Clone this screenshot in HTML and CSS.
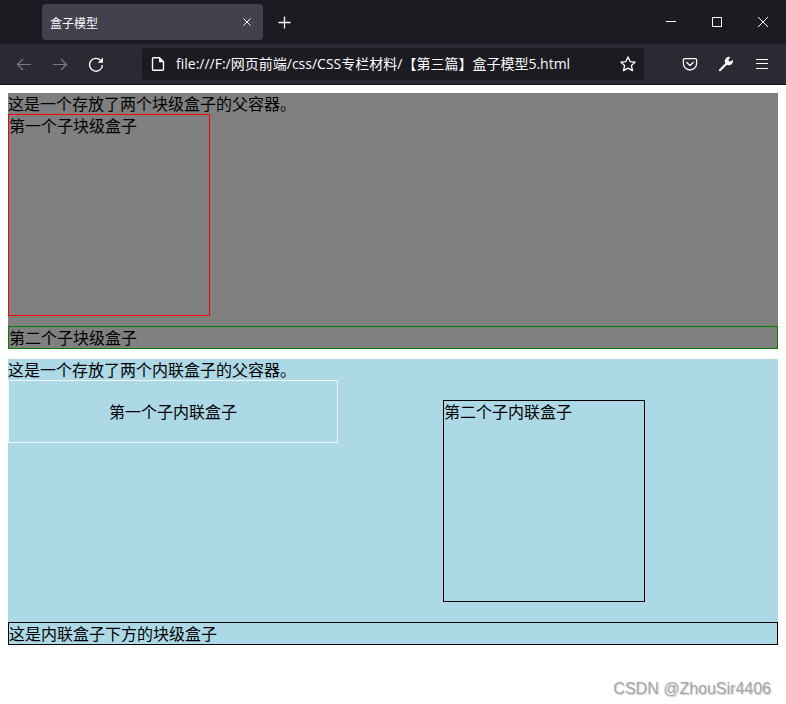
FILE: index.html
```html
<!DOCTYPE html>
<html lang="zh-CN">
<head>
<meta charset="utf-8">
<title>盒子模型</title>
<link rel="stylesheet" href="styles.css">
</head>
<body>
<header class="browser">
  <div class="tabs">
    <div class="tab">
      <span class="tab-title">盒子模型</span>
      <button class="tab-close" type="button" aria-label="关闭标签页">
        <svg class="icon" viewBox="0 0 16 16"><path d="M4.500 4.500l7 7M11.500 4.500l-7 7"/></svg>
      </button>
    </div>
    <button class="tool" type="button" aria-label="新建标签页">
      <svg class="icon" viewBox="0 0 16 16"><path d="M8.5 2.5v12M2.5 8.5h12" stroke-width="1.3"/></svg>
    </button>
    <div class="window-buttons">
      <button class="window-button" type="button" aria-label="最小化">
        <svg class="icon" viewBox="0 0 16 16"><path d="M3 7.5h10"/></svg>
      </button>
      <button class="window-button" type="button" aria-label="最大化">
        <svg class="icon" viewBox="0 0 16 16"><path d="M3.5 3.5h9v9h-9z"/></svg>
      </button>
      <button class="window-button" type="button" aria-label="关闭">
        <svg class="icon" viewBox="0 0 16 16"><path d="M3 3l10 10M13 3L3 13"/></svg>
      </button>
    </div>
  </div>
  <div class="toolbar">
    <button class="tool" type="button" aria-label="后退" disabled>
      <svg class="icon" viewBox="0 0 16 16"><path d="M15 8.5H1.5M7 3L1.500 8.500L7 14" stroke-width="1.2"/></svg>
    </button>
    <button class="tool" type="button" aria-label="前进" disabled>
      <svg class="icon" viewBox="0 0 16 16"><path d="M1 8.500H14.500M9 3l5.500 5.500L9 14" stroke-width="1.2"/></svg>
    </button>
    <button class="tool" type="button" aria-label="重新载入">
      <svg class="icon" viewBox="0 0 16 16"><path d="M12.600 4.300A6.400 6.400 0 1 0 14.400 9" stroke-width="1.4"/><path class="solid" d="M15 1.500v5.200h-5.200z"/></svg>
    </button>
    <div class="address">
      <svg class="icon" viewBox="0 0 16 16"><path d="M3.500 1.700h6l4 4v7.600a1 1 0 0 1-1 1h-9a1 1 0 0 1-1-1V2.700a1 1 0 0 1 1-1z" stroke-width="1.4"/><path class="solid" d="M9 1.500v4.700h4.700z"/></svg>
      <input class="url" type="text" aria-label="地址" value="file:///F:/网页前端/css/CSS专栏材料/【第三篇】盒子模型5.html">
      <button class="bookmark" type="button" aria-label="收藏">
        <svg class="icon" viewBox="0 0 16 16"><path d="M8 .9l2.100 4.700 5.100.5-3.800 3.500 1.100 5L8 12.100l-4.500 2.500 1.100-5L.8 6.100l5.100-.5z" stroke-width="1.300" stroke-linejoin="round"/></svg>
      </button>
    </div>
    <button class="tool" type="button" aria-label="Pocket">
      <svg class="icon" viewBox="0 0 16 16"><path d="M2.600 2.600h10.800a1.200 1.200 0 0 1 1.200 1.200v3.600a6.600 6.600 0 0 1-13.200 0V3.800a1.200 1.200 0 0 1 1.200-1.200z" stroke-width="1.300"/><path d="M4.800 6.500L8 9.600l3.200-3.100" stroke-width="1.400" stroke-linecap="round" stroke-linejoin="round"/></svg>
    </button>
    <button class="tool" type="button" aria-label="开发者工具">
      <svg class="icon" viewBox="0 0 16 16"><path class="solid" d="M1.200 13.400L7.300 7.300A4.200 4.200 0 0 1 12.400 1.200L10.600 3.400l.2 1.900 1.900.2 2.200-1.800A4.200 4.200 0 0 1 8.900 8.700L2.700 14.900a1.060 1.060 0 0 1-1.500-1.500z"/></svg>
    </button>
    <button class="tool" type="button" aria-label="菜单">
      <svg class="icon" viewBox="0 0 16 16"><path d="M2 3.500h12M2 7.500h12M2 12.500h12" stroke-width="1.200"/></svg>
    </button>
  </div>
</header>
<main class="page">
  <section class="block-parent">
    这是一个存放了两个块级盒子的父容器。
    <div class="block-first">第一个子块级盒子</div>
    <div class="block-second">第二个子块级盒子</div>
  </section>
  <section class="inline-parent">
    这是一个存放了两个内联盒子的父容器。
    <div class="inline-row">
      <span class="inline-first">第一个子内联盒子</span>
      <span class="inline-second">第二个子内联盒子</span>
    </div>
    <div class="block-last">这是内联盒子下方的块级盒子</div>
  </section>
</main>
<div class="watermark">CSDN @ZhouSir4406</div>
</body>
</html>
```
FILE: styles.css
```css
* {
  box-sizing: border-box;
}

body {
  margin: 0;
  min-height: 100vh;
  position: relative;
  background: #fff;
  color: #000;
  font: 16px/21px "Noto Sans CJK SC", sans-serif;
}

button {
  display: flex;
  align-items: center;
  justify-content: center;
  flex: none;
  padding: 0;
  border: 0;
  background: none;
  color: inherit;
}

.icon {
  display: block;
  flex: none;
  width: 16px;
  height: 16px;
  fill: none;
  stroke: currentColor;
}

.solid {
  fill: currentColor;
  stroke: none;
}

.browser {
  background: #2b2a33;
  color: #fbfbfe;
  border-bottom: 1px solid #0c0c0d;
}

.tabs {
  display: flex;
  align-items: center;
  gap: 3px;
  height: 44px;
  padding-left: 42px;
  background: #1c1b22;
}

.tab {
  display: flex;
  align-items: center;
  justify-content: space-between;
  width: 221px;
  height: 36px;
  padding: 0 8px;
  border-radius: 4px;
  background: #42414d;
}

.tab-title {
  font-size: 12px;
}

.window-buttons {
  display: flex;
  margin-left: auto;
}

.window-button {
  width: 46px;
  height: 44px;
}

.toolbar {
  display: flex;
  align-items: center;
  height: 40px;
  padding: 0 6px;
}

.tool {
  width: 36px;
  height: 36px;
}

.tool:disabled {
  color: #7c7b82;
}

.address {
  display: flex;
  flex: 1;
  align-items: center;
  gap: 10px;
  min-width: 0;
  height: 32px;
  margin: 0 28px;
  padding: 0 8px;
  border-radius: 4px;
  background: #1c1b22;
}

.url {
  flex: 1;
  min-width: 0;
  padding: 0;
  border: 0;
  outline: 0;
  background: none;
  color: inherit;
  font: 14px/20px "Open Sans", "Noto Sans CJK SC", sans-serif;
}

.page {
  padding: 8px;
}

.block-parent {
  margin-bottom: 10px;
  background: #808080;
}

.block-first {
  width: 202px;
  height: 202px;
  margin-bottom: 10px;
  border: 1px solid red;
}

.block-second {
  border: 1px solid green;
}

.inline-parent {
  background: #add8e6;
}

.inline-row {
  display: flex;
  align-items: flex-start;
  gap: 5px;
}

.inline-first {
  padding: 20px 100px;
  border: 1px solid #f5f5f5;
}

.inline-second {
  width: 202px;
  height: 202px;
  margin: 20px 100px;
  border: 1px solid #000;
}

.block-last {
  border: 1px solid #000;
}

.watermark {
  position: absolute;
  right: 15px;
  bottom: 5px;
  color: #a6a6a6;
  font: 16px/21px "Liberation Sans", sans-serif;
  text-shadow: 1px 1px 1px #ccc;
}
```
